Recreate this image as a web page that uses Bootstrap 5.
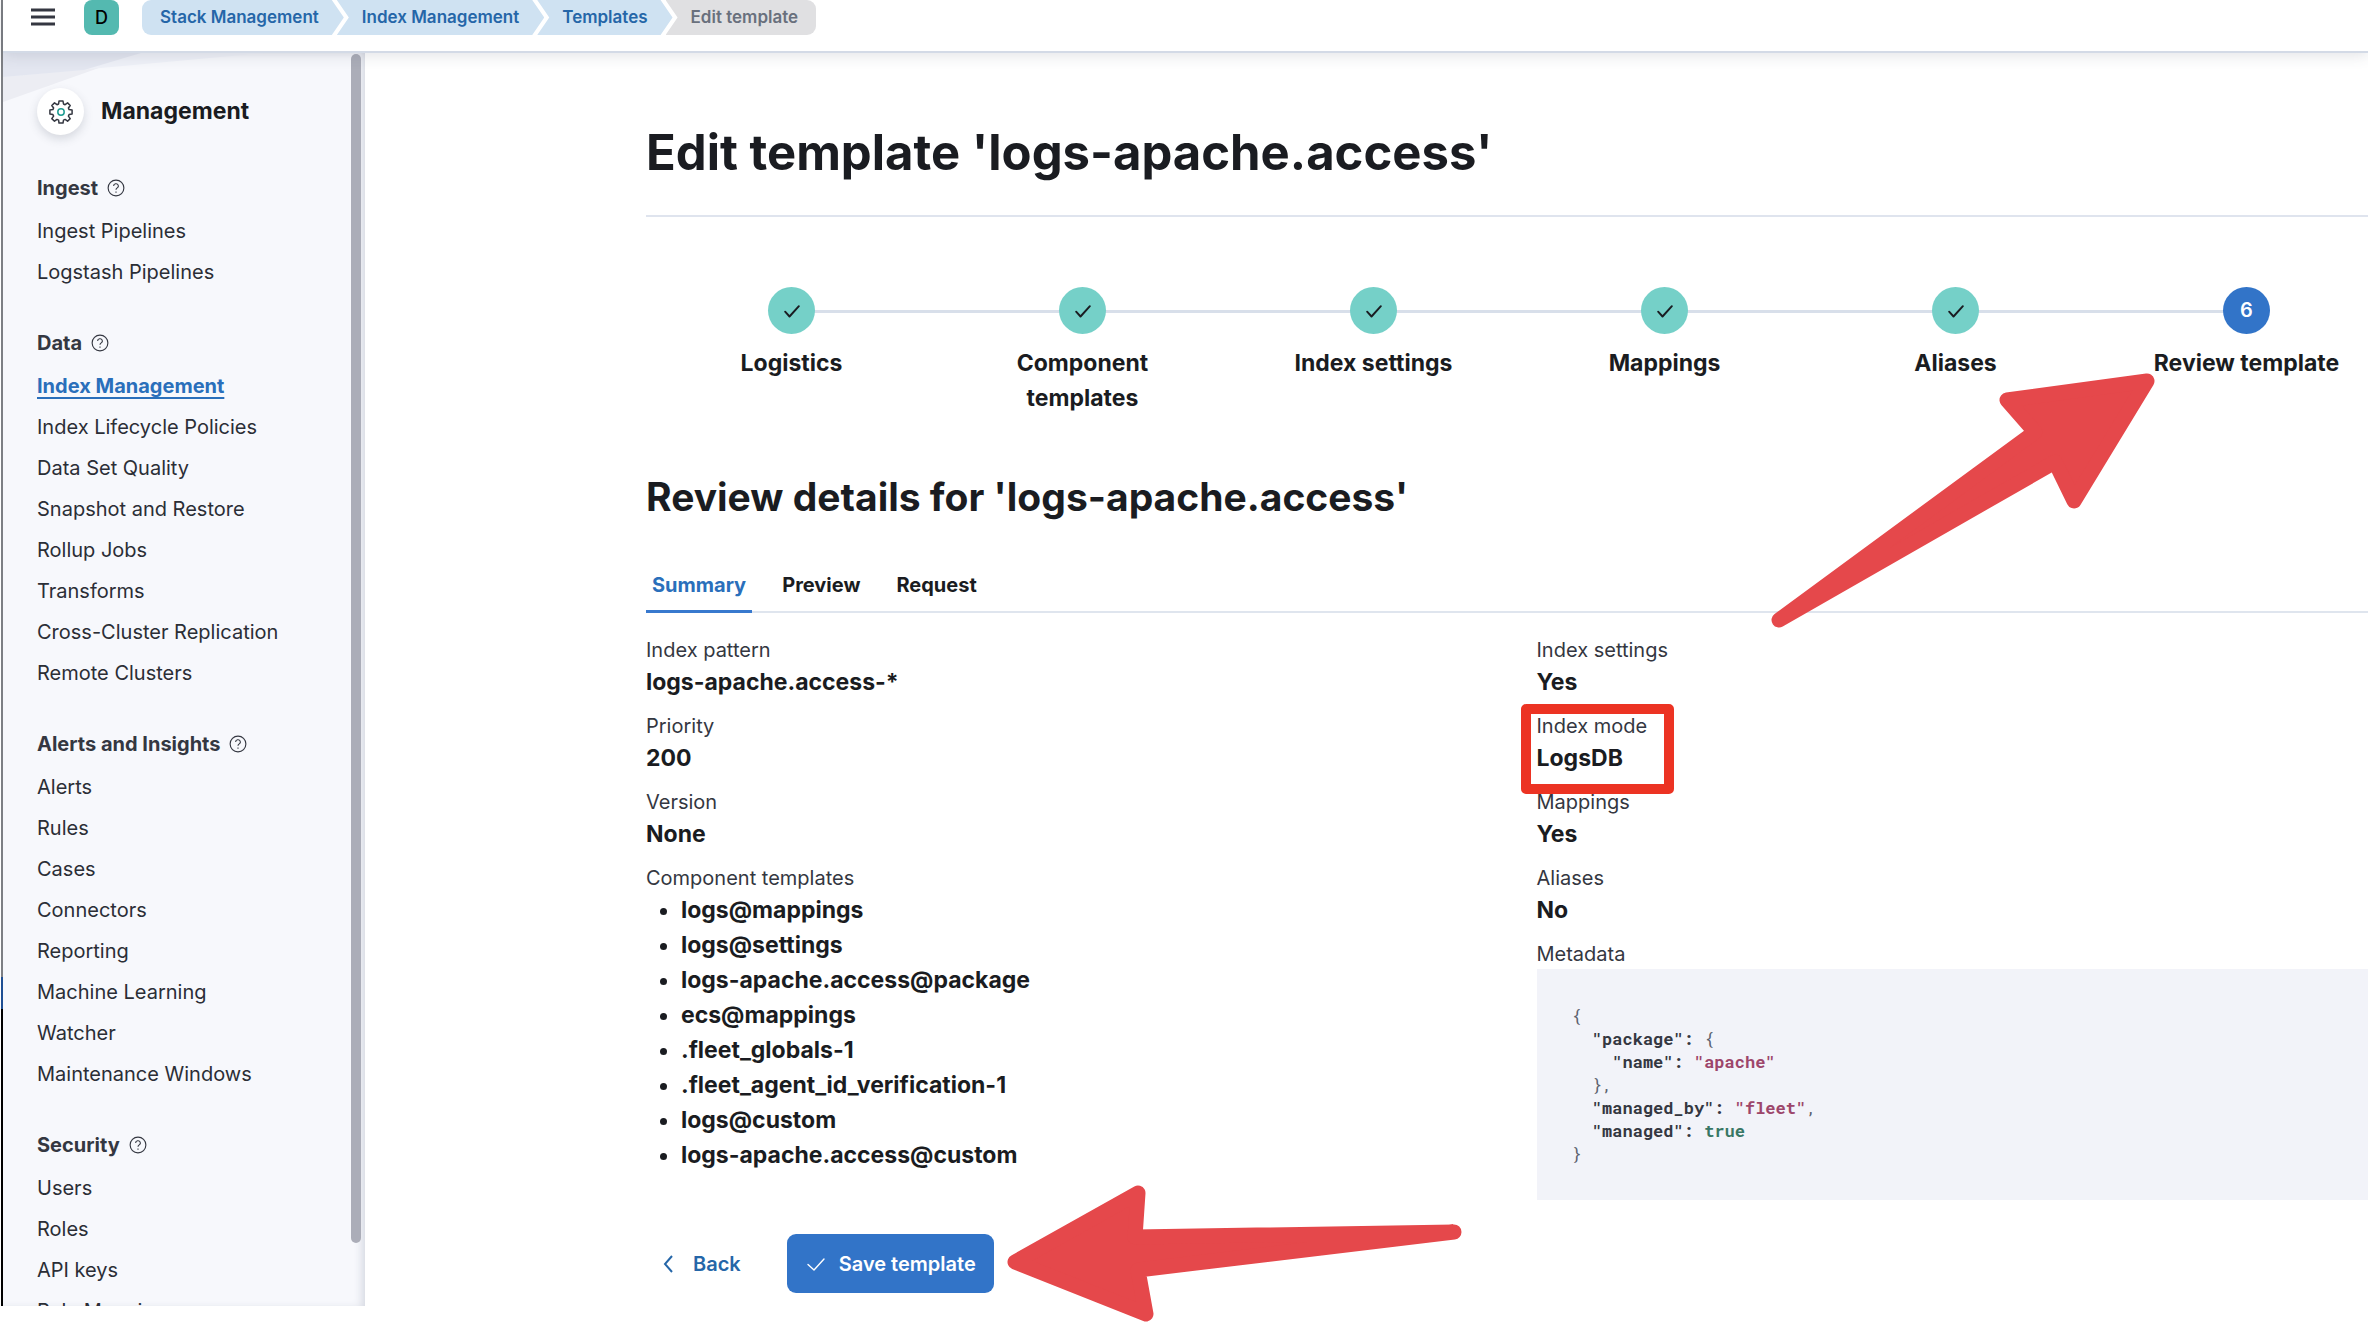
<!DOCTYPE html>
<html lang="en">
<head>
<meta charset="utf-8">
<meta name="viewport" content="width=device-width, initial-scale=1">
<title>Edit template - Index Management</title>
<link rel="stylesheet" href="https://cdn.jsdelivr.net/npm/bootstrap@5.3.0/dist/css/bootstrap.min.css">
<style>
  body { font-family: Inter, "Liberation Sans", sans-serif; font-size: 20px; line-height: 30px; color: #1a1c21; background: #fff; }
  a { text-decoration: none; color: inherit; }
  .app-shell { height: calc(100vh - 28px); padding-left: 3px; background: linear-gradient(#7d7f84 0 977px, #1f4f93 977px 1009px, #000 1009px) 1px 0 / 2px 100% no-repeat; }
  .top-bar { height: 53px; border-bottom: 2px solid #d3dae6; box-shadow: 0 2px 14px rgba(60,70,90,.16); z-index: 2; background: #fff; padding-left: 28px; }
  .menu-btn { border: 0; background: none; padding: 0; width: 24px; }
  .space-avatar { width: 35px; height: 35px; border-radius: 8px; background: #54b9b0; font-size: 18px; font-weight: 500; color: #000; margin-left: 29px; }
  .crumbs { margin-left: 23px; font-size: 17px; font-weight: 600; line-height: 35px; list-style: none; padding: 0; }
  .crumbs li { height: 35px; padding: 0 25px; background: #cfe2f2; color: #2566a8; margin-left: -7px; clip-path: polygon(0 0, calc(100% - 12px) 0, 100% 50%, calc(100% - 12px) 100%, 0 100%, 12px 50%); }
  .crumbs li:first-child { margin-left: 0; padding-left: 18px; border-radius: 9px 0 0 9px; clip-path: polygon(0 0, calc(100% - 12px) 0, 100% 50%, calc(100% - 12px) 100%, 0 100%); }
  .crumbs li:last-child { padding-right: 18px; background: #e0e0e2; color: #69707d; border-radius: 0 9px 9px 0; clip-path: polygon(0 0, 100% 0, 100% 100%, 0 100%, 12px 50%); }
  .side-nav { width: 362px; background: #f7f8fc; box-shadow: inset -6px 0 8px -3px #d5d8e1; overflow: hidden; padding: 35px 0 0 34px; }
  .side-nav .facets { left: 0; top: 0; }
  .scroll-thumb { right: 4px; top: 1px; width: 10px; height: 1189px; border-radius: 5px; background: #abadb8; }
  .app-mark { width: 47px; height: 47px; background: #fff; box-shadow: 0 4px 10px rgba(60,70,90,.18); }
  .side-title { font-size: 23px; font-weight: 700; margin: 0 0 0 17px; }
  .side-group { font-size: 20px; font-weight: 700; color: #343741; line-height: 30px; margin: 0; padding-bottom: 8px; }
  .side-group svg { margin-left: 9px; }
  .side-list { list-style: none; padding: 0; margin: 0 0 35px; line-height: 41px; color: #2b2e36; }
  .side-list .current { color: #2a6fbb; font-weight: 700; text-decoration: underline; text-decoration-thickness: 2px; text-underline-offset: 4px; }
  .side-head { margin-bottom: 38px; }
  .main-pane { overflow: hidden; padding: 70px 0 0 281px; }
  .wide { margin-right: -24px; }
  h1 { font-size: 49px; line-height: 60px; font-weight: 700; margin: 0; padding-bottom: 32px; border-bottom: 2px solid #dfe4ee; }
  .steps { list-style: none; padding: 0; margin: 70px 0 0; }
  .steps li { flex: 1 1 0; font-size: 23px; line-height: 35px; font-weight: 700; text-align: center; position: relative; }
  .steps li + li::before { content: ""; position: absolute; left: -50%; width: 100%; top: 23px; height: 3px; background: #d8dfea; }
  .step-dot { width: 47px; height: 47px; border-radius: 50%; background: #75d0c8; margin: 0 auto 12px; position: relative; z-index: 1; }
  .step-dot.now { background: #3274c8; color: #fff; font-size: 20px; font-weight: 600; }
  .step-name { display: block; padding: 0 40px; margin: 0 auto; }
  .steps li:last-child .step-name { padding: 0; }
  h2 { font-size: 39px; line-height: 48px; font-weight: 700; margin: 57px 0 0; }
  .tab-row { gap: 24px; margin-top: 40px; border-bottom: 2px solid #dfe5ee; }
  .tab-row button { border: 0; background: none; padding: 7px 6px 8px; margin-bottom: -2px; height: 52px; font-size: 20px; font-weight: 700; color: #1a1c21; border-bottom: 3px solid transparent; }
  .tab-row .active { color: #2a6fbb; border-color: #3879ce; }
  .facts { gap: 35px; margin-top: 22px; }
  .facts dl { flex: 1 1 0; margin: 0; }
  .facts dt { font-weight: 400; color: #343741; line-height: 30px; }
  .facts dd { font-size: 23px; line-height: 35px; font-weight: 700; margin: 0 0 11px; }
  .facts ul { padding-left: 35px; margin: 0; }
  .facts dd.code-cell { margin: 0; }
  .facts pre { font-family: "Roboto Mono", "DejaVu Sans Mono", monospace; font-size: 17px; line-height: 23px; font-weight: 400; background: #f2f3f9; color: #5b616e; padding: 35px; margin: 0; }
  .facts pre span { display: block; }
  .facts pre b { color: #343741; }
  .facts pre .str { color: #9d466b; }
  .facts pre .lit { color: #387765; }
  .mode-frame { left: -16px; top: -7px; width: 153px; height: 90px; border: 10px solid #ec3323; border-radius: 5px; }
  .actions { margin-top: 34px; padding-left: 16px; gap: 46px; }
  .btn-flat { font-size: 20px; font-weight: 600; color: #2566a8; padding: 0; border: 0; gap: 19px; }
  .btn-save { font-size: 20px; font-weight: 600; color: #fff; background: #3274c8; border: 0; border-radius: 9px; height: 59px; padding: 0 18px; gap: 12px; }
  .pointer { pointer-events: none; fill: #e5484b; stroke: #e5484b; stroke-width: 15px; stroke-linejoin: round; z-index: 3; }
  .to-review { left: 1765px; top: 368px; }
  .to-save { left: 1000px; top: 1180px; }
</style>
<script src="https://cdn.jsdelivr.net/npm/bootstrap@5.3.0/dist/js/bootstrap.bundle.min.js"></script>
</head>
<body class="position-relative min-vh-100">
<svg width="0" height="0" class="position-absolute">
  <symbol id="help" viewBox="0 0 16 16"><circle cx="8" cy="8" r="7" fill="none" stroke="currentColor"/><path d="M5.9 6.3a2.1 2 0 1 1 3.2 1.6C8.300 8.400 8 8.700 8 9.600M8 11v1.200" fill="none" stroke="currentColor"/></symbol>
  <symbol id="tick" viewBox="0 0 16 16"><path d="M3 8.500l3.200 3.500L13 4.500" fill="none" stroke="currentColor" stroke-width="1.400" stroke-linecap="round" stroke-linejoin="round"/></symbol>
  <symbol id="tick-thin" viewBox="0 0 22 22"><path d="M3 11.500l6 5.500L19 6" fill="none" stroke="currentColor" stroke-width="1.400" stroke-linecap="round" stroke-linejoin="round"/></symbol>
</svg>
<div class="app-shell d-flex flex-column">
  <header class="top-bar d-flex align-items-start flex-shrink-0 position-relative">
    <button class="menu-btn" aria-label="Menu"><svg class="d-block" width="24" height="30" viewBox="0 0 24 30"><path d="M0 10h24M0 17h24M0 24h24" stroke="#343741" stroke-width="3"/></svg></button>
    <span class="space-avatar d-flex align-items-center justify-content-center">D</span>
    <nav aria-label="Breadcrumb"><ol class="crumbs d-flex mb-0">
      <li><a href="#">Stack Management</a></li><li><a href="#">Index Management</a></li><li><a href="#">Templates</a></li><li>Edit template</li>
    </ol></nav>
  </header>
  <div class="d-flex flex-grow-1 overflow-hidden">
    <aside class="side-nav flex-shrink-0 position-relative">
      <svg class="facets position-absolute" width="270" height="60" viewBox="0 0 270 60"><path d="M0 0H138L0 49z" fill="#ecedf3"/><path d="M0 0H262L0 24z" fill="#eff1f8"/><path d="M0 0H138L81 17 0 24z" fill="#e3e6f0"/></svg>
      <span class="scroll-thumb position-absolute"></span>
      <div class="side-head d-flex align-items-center position-relative">
        <span class="app-mark rounded-circle d-flex align-items-center justify-content-center"><svg width="24" height="24" viewBox="0 0 24 24" fill="none" stroke-width="1.500"><path stroke="#343741" stroke-linejoin="round" d="M10 1h4l.5 3 1.600.7 2.500-1.800 2.600 2.600-1.800 2.500.7 1.600 3 .4v4l-3 .5-.7 1.600 1.800 2.500-2.600 2.600-2.500-1.800-1.600.7-.5 3h-4l-.4-3-1.600-.7-2.500 1.800-2.700-2.600 1.800-2.500-.7-1.600-3-.5v-4l3-.4.7-1.600-1.800-2.500 2.700-2.600 2.500 1.800L9.600 4z"/><circle cx="12" cy="12" r="3.200" stroke="#1f9c92"/></svg></span>
        <h3 class="side-title">Management</h3>
      </div>
      <h4 class="side-group d-flex align-items-center">Ingest <svg width="18" height="18"><use href="#help"/></svg></h4>
      <ul class="side-list"><li><a href="#">Ingest Pipelines</a></li><li><a href="#">Logstash Pipelines</a></li></ul>
      <h4 class="side-group d-flex align-items-center">Data <svg width="18" height="18"><use href="#help"/></svg></h4>
      <ul class="side-list"><li><a href="#" class="current">Index Management</a></li><li><a href="#">Index Lifecycle Policies</a></li><li><a href="#">Data Set Quality</a></li><li><a href="#">Snapshot and Restore</a></li><li><a href="#">Rollup Jobs</a></li><li><a href="#">Transforms</a></li><li><a href="#">Cross-Cluster Replication</a></li><li><a href="#">Remote Clusters</a></li></ul>
      <h4 class="side-group d-flex align-items-center">Alerts and Insights <svg width="18" height="18"><use href="#help"/></svg></h4>
      <ul class="side-list"><li><a href="#">Alerts</a></li><li><a href="#">Rules</a></li><li><a href="#">Cases</a></li><li><a href="#">Connectors</a></li><li><a href="#">Reporting</a></li><li><a href="#">Machine Learning</a></li><li><a href="#">Watcher</a></li><li><a href="#">Maintenance Windows</a></li></ul>
      <h4 class="side-group d-flex align-items-center">Security <svg width="18" height="18"><use href="#help"/></svg></h4>
      <ul class="side-list"><li><a href="#">Users</a></li><li><a href="#">Roles</a></li><li><a href="#">API keys</a></li><li><a href="#">Role Mappings</a></li></ul>
    </aside>
    <main class="main-pane flex-grow-1">
      <div class="wide">
        <h1>Edit template 'logs-apache.access'</h1>
        <ol class="steps d-flex">
          <li><span class="step-dot d-flex align-items-center justify-content-center"><svg width="22" height="22"><use href="#tick"/></svg></span><span class="step-name">Logistics</span></li>
          <li><span class="step-dot d-flex align-items-center justify-content-center"><svg width="22" height="22"><use href="#tick"/></svg></span><span class="step-name">Component templates</span></li>
          <li><span class="step-dot d-flex align-items-center justify-content-center"><svg width="22" height="22"><use href="#tick"/></svg></span><span class="step-name">Index settings</span></li>
          <li><span class="step-dot d-flex align-items-center justify-content-center"><svg width="22" height="22"><use href="#tick"/></svg></span><span class="step-name">Mappings</span></li>
          <li><span class="step-dot d-flex align-items-center justify-content-center"><svg width="22" height="22"><use href="#tick"/></svg></span><span class="step-name">Aliases</span></li>
          <li><span class="step-dot now d-flex align-items-center justify-content-center">6</span><span class="step-name">Review template</span></li>
        </ol>
        <h2>Review details for 'logs-apache.access'</h2>
        <div class="tab-row d-flex" role="tablist"><button class="active" role="tab" aria-selected="true">Summary</button><button role="tab">Preview</button><button role="tab">Request</button></div>
        <div class="facts d-flex">
          <dl>
            <dt>Index pattern</dt><dd>logs-apache.access-*</dd>
            <dt>Priority</dt><dd>200</dd>
            <dt>Version</dt><dd>None</dd>
            <dt>Component templates</dt>
            <dd class="mb-0"><ul><li>logs@mappings</li><li>logs@settings</li><li>logs-apache.access@package</li><li>ecs@mappings</li><li>.fleet_globals-1</li><li>.fleet_agent_id_verification-1</li><li>logs@custom</li><li>logs-apache.access@custom</li></ul></dd>
          </dl>
          <dl>
            <dt>Index settings</dt><dd>Yes</dd>
            <div class="position-relative"><dt>Index mode</dt><dd>LogsDB</dd><span class="mode-frame position-absolute"></span></div>
            <dt>Mappings</dt><dd>Yes</dd>
            <dt>Aliases</dt><dd>No</dd>
            <dt>Metadata</dt>
            <dd class="code-cell"><pre><span>{</span><span>  <b>"package":</b> {</span><span>    <b>"name":</b> <b class="str">"apache"</b></span><span>  },</span><span>  <b>"managed_by":</b> <b class="str">"fleet"</b>,</span><span>  <b>"managed":</b> <b class="lit">true</b></span><span>}</span></pre></dd>
          </dl>
        </div>
        <div class="actions d-flex align-items-center">
          <button class="btn btn-flat d-flex align-items-center"><svg width="12" height="18" viewBox="0 0 12 18"><path d="M10 1L3 9l7 8" fill="none" stroke="currentColor" stroke-width="2"/></svg>Back</button>
          <button class="btn btn-save d-flex align-items-center"><svg width="22" height="22"><use href="#tick-thin"/></svg>Save template</button>
        </div>
      </div>
    </main>
  </div>
</div>
<svg class="pointer to-review position-absolute" width="400" height="270" viewBox="1765 368 400 270"><path d="M2147 381L2007 400 2035 432 1779 620 2055 462 2074 501z"/></svg>
<svg class="pointer to-save position-absolute" width="470" height="150" viewBox="1000 1180 470 150"><path d="M1015 1262L1138 1193 1135 1237 1454 1232 1138 1270 1146 1314z"/></svg>
</body>
</html>
